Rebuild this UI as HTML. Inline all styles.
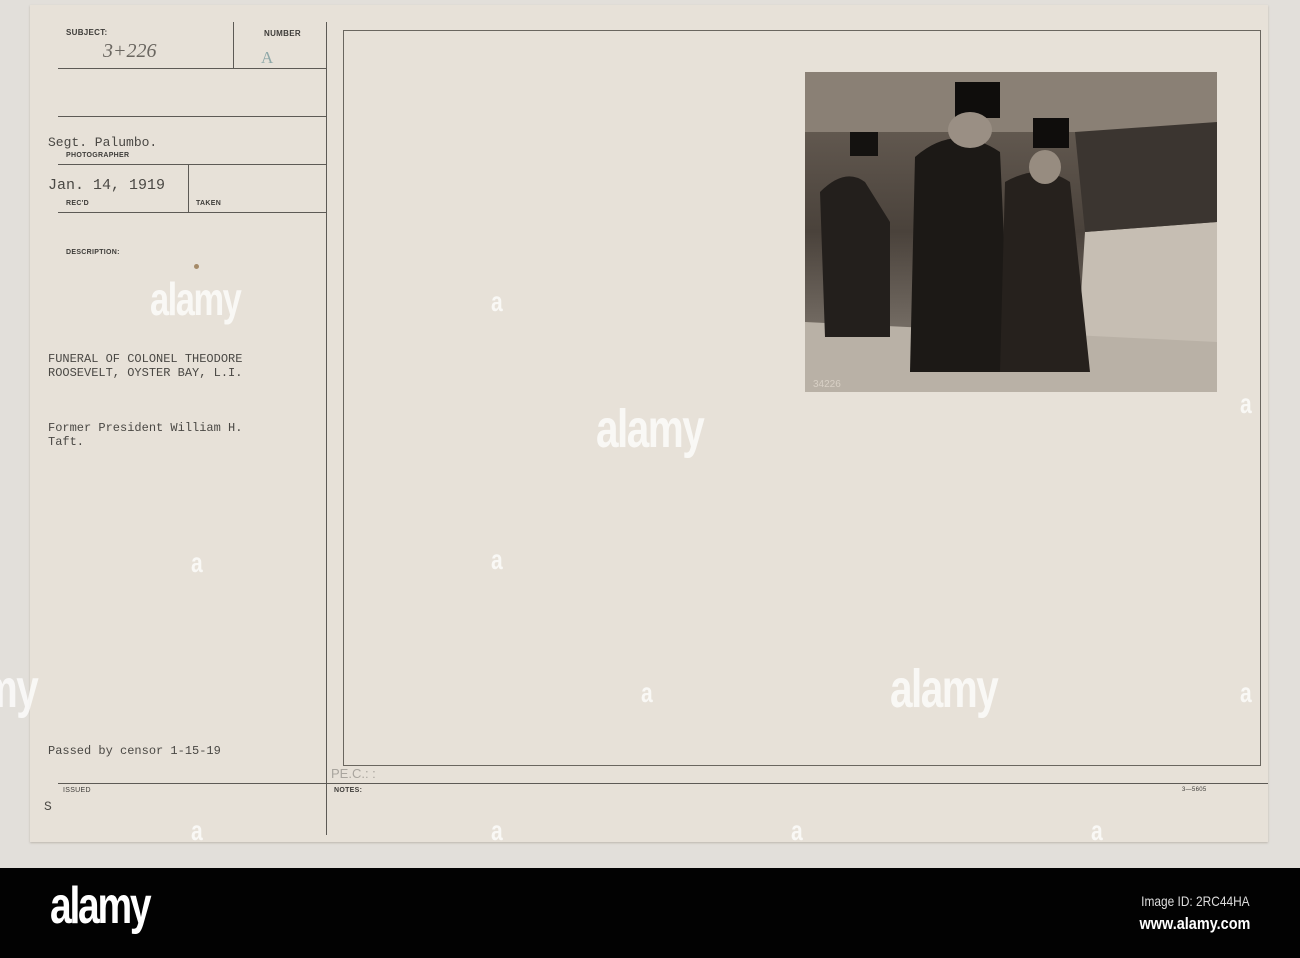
<!DOCTYPE html>
<html><head><style>
body{margin:0;width:1300px;height:958px;background:#e2dfda;position:relative;overflow:hidden;font-family:"Liberation Mono",monospace;}
.card{position:absolute;left:30px;top:5px;width:1238px;height:837px;background:#e7e1d8;box-shadow:0 1px 2px #bcb6ad;}
.h{position:absolute;height:1px;background:#5d5a55;}
.v{position:absolute;width:1px;background:#5d5a55;}
.lab{position:absolute;font-family:"Liberation Sans",sans-serif;font-size:8px;font-weight:bold;color:#3e3c39;letter-spacing:.3px}
.t{position:absolute;color:#4a4844;font-size:13px;white-space:pre;}
.wm{position:absolute;color:rgba(255,255,255,.75);font-family:"Liberation Sans",sans-serif;font-weight:bold;letter-spacing:-2px;transform:scaleX(.75);transform-origin:left top}
.band{position:absolute;left:0;top:868px;width:1300px;height:90px;background:#020202}
</style></head><body>
<div class="card"></div>
<div class="h" style="left:58px;top:68px;width:268px"></div>
<div class="v" style="left:233px;top:22px;height:46px"></div>
<div class="h" style="left:58px;top:116px;width:268px"></div>
<div class="h" style="left:58px;top:164px;width:268px"></div>
<div class="v" style="left:188px;top:165px;height:47px"></div>
<div class="h" style="left:58px;top:212px;width:268px"></div>
<div class="v" style="left:326px;top:22px;height:813px"></div>
<div style="position:absolute;left:343px;top:30px;width:916px;height:734px;border:1px solid #6a665f"></div>
<div class="h" style="left:58px;top:783px;width:1210px"></div>
<div class="lab" style="left:66px;top:28px">SUBJECT:</div>
<div class="lab" style="left:264px;top:29px">NUMBER</div>
<div style="position:absolute;left:103px;top:40px;font-family:'Liberation Serif',serif;font-style:italic;font-size:20px;color:#6a6660">3+226</div>
<div style="position:absolute;left:261px;top:48px;font-size:17px;color:#8fa8a8;font-family:'Liberation Serif',serif">A</div>
<div class="t" style="left:48px;top:135px">Segt. Palumbo.</div>
<div class="lab" style="left:66px;top:152px;font-size:7px">PHOTOGRAPHER</div>
<div class="t" style="left:48px;top:177px;font-size:15px">Jan. 14, 1919</div>
<div class="lab" style="left:66px;top:200px;font-size:7px">REC'D</div>
<div class="lab" style="left:196px;top:200px;font-size:7px">TAKEN</div>
<div class="lab" style="left:66px;top:249px;font-size:7px">DESCRIPTION:</div>
<div style="position:absolute;left:194px;top:264px;width:5px;height:5px;border-radius:50%;background:#a58a68"></div>
<div class="t" style="left:48px;top:352px;font-size:12px">FUNERAL OF COLONEL THEODORE
ROOSEVELT, OYSTER BAY, L.I.</div>
<div class="t" style="left:48px;top:421px;font-size:12px">Former President William H.
Taft.</div>
<div class="t" style="left:48px;top:744px;font-size:12px">Passed by censor 1-15-19</div>
<div class="lab" style="left:63px;top:787px;font-size:7px;font-weight:normal">ISSUED</div>
<div class="t" style="left:44px;top:799px;font-size:13px">S</div>
<div class="lab" style="left:334px;top:787px;font-size:7px">NOTES:</div>
<div style="position:absolute;left:331px;top:766px;color:#a9a59e;font-size:13px;font-family:'Liberation Sans',sans-serif">PE.C.: :</div>
<div class="lab" style="left:1182px;top:787px;font-size:6px;font-weight:normal">3—5605</div>
<svg style="position:absolute;left:805px;top:72px" width="412" height="320" viewBox="0 0 412 320">
<defs><linearGradient id="g" x1="0" y1="0" x2="0" y2="1"><stop offset="0" stop-color="#6f655b"/><stop offset=".5" stop-color="#4a423b"/><stop offset="1" stop-color="#8f877e"/></linearGradient></defs>
<rect width="412" height="320" fill="url(#g)"/>
<rect x="0" y="0" width="412" height="60" fill="#8a8075"/>
<path d="M280 160 L412 150 L412 320 L270 320Z" fill="#c6beb3"/>
<path d="M0 250 L412 270 L412 320 L0 320Z" fill="#b9b1a6"/>
<path d="M15 120 Q40 95 60 110 L85 150 L85 265 L20 265Z" fill="#231f1c"/>
<rect x="45" y="60" width="28" height="24" fill="#141210"/>
<path d="M110 85 Q150 50 195 80 L205 300 L105 300Z" fill="#1c1916"/>
<rect x="150" y="10" width="45" height="36" fill="#0f0d0c"/>
<ellipse cx="165" cy="58" rx="22" ry="18" fill="#9a8f84"/>
<path d="M200 110 Q235 90 265 110 L285 300 L195 300Z" fill="#26211d"/>
<rect x="228" y="46" width="36" height="30" fill="#0f0d0c"/>
<ellipse cx="240" cy="95" rx="16" ry="17" fill="#978c80"/>
<path d="M270 60 L412 50 L412 150 L280 160Z" fill="#3b3530"/>
<text x="8" y="315" font-size="10" fill="#d8d0c5" font-family="Liberation Sans">34226</text>
</svg>
<div class="wm" style="left:150px;top:272px;font-size:46px">alamy</div>
<div class="wm" style="left:596px;top:398px;font-size:54px">alamy</div>
<div class="wm" style="left:-70px;top:658px;font-size:54px">alamy</div>
<div class="wm" style="left:890px;top:658px;font-size:54px">alamy</div>
<div class="wm" style="left:191px;top:547px;font-size:28px">a</div>
<div class="wm" style="left:491px;top:286px;font-size:28px">a</div>
<div class="wm" style="left:1240px;top:388px;font-size:28px">a</div>
<div class="wm" style="left:641px;top:677px;font-size:28px">a</div>
<div class="wm" style="left:1240px;top:677px;font-size:28px">a</div>
<div class="wm" style="left:491px;top:544px;font-size:28px">a</div>
<div class="wm" style="left:191px;top:815px;font-size:28px">a</div>
<div class="wm" style="left:491px;top:815px;font-size:28px">a</div>
<div class="wm" style="left:791px;top:815px;font-size:28px">a</div>
<div class="wm" style="left:1091px;top:815px;font-size:28px">a</div>
<div class="band"></div>
<div style="position:absolute;left:50px;top:876px;color:#fff;font-family:'Liberation Sans',sans-serif;font-weight:bold;font-size:52px;letter-spacing:-3px;transform:scaleX(.75);transform-origin:left top">alamy</div>
<div style="position:absolute;right:50px;top:893px;color:#ddd;font-family:'Liberation Sans',sans-serif;font-size:14px;transform:scaleX(.85);transform-origin:right top">Image ID: 2RC44HA</div>
<div style="position:absolute;right:50px;top:914px;color:#fff;font-family:'Liberation Sans',sans-serif;font-size:17px;font-weight:bold;transform:scaleX(.85);transform-origin:right top">www.alamy.com</div>
</body></html>
